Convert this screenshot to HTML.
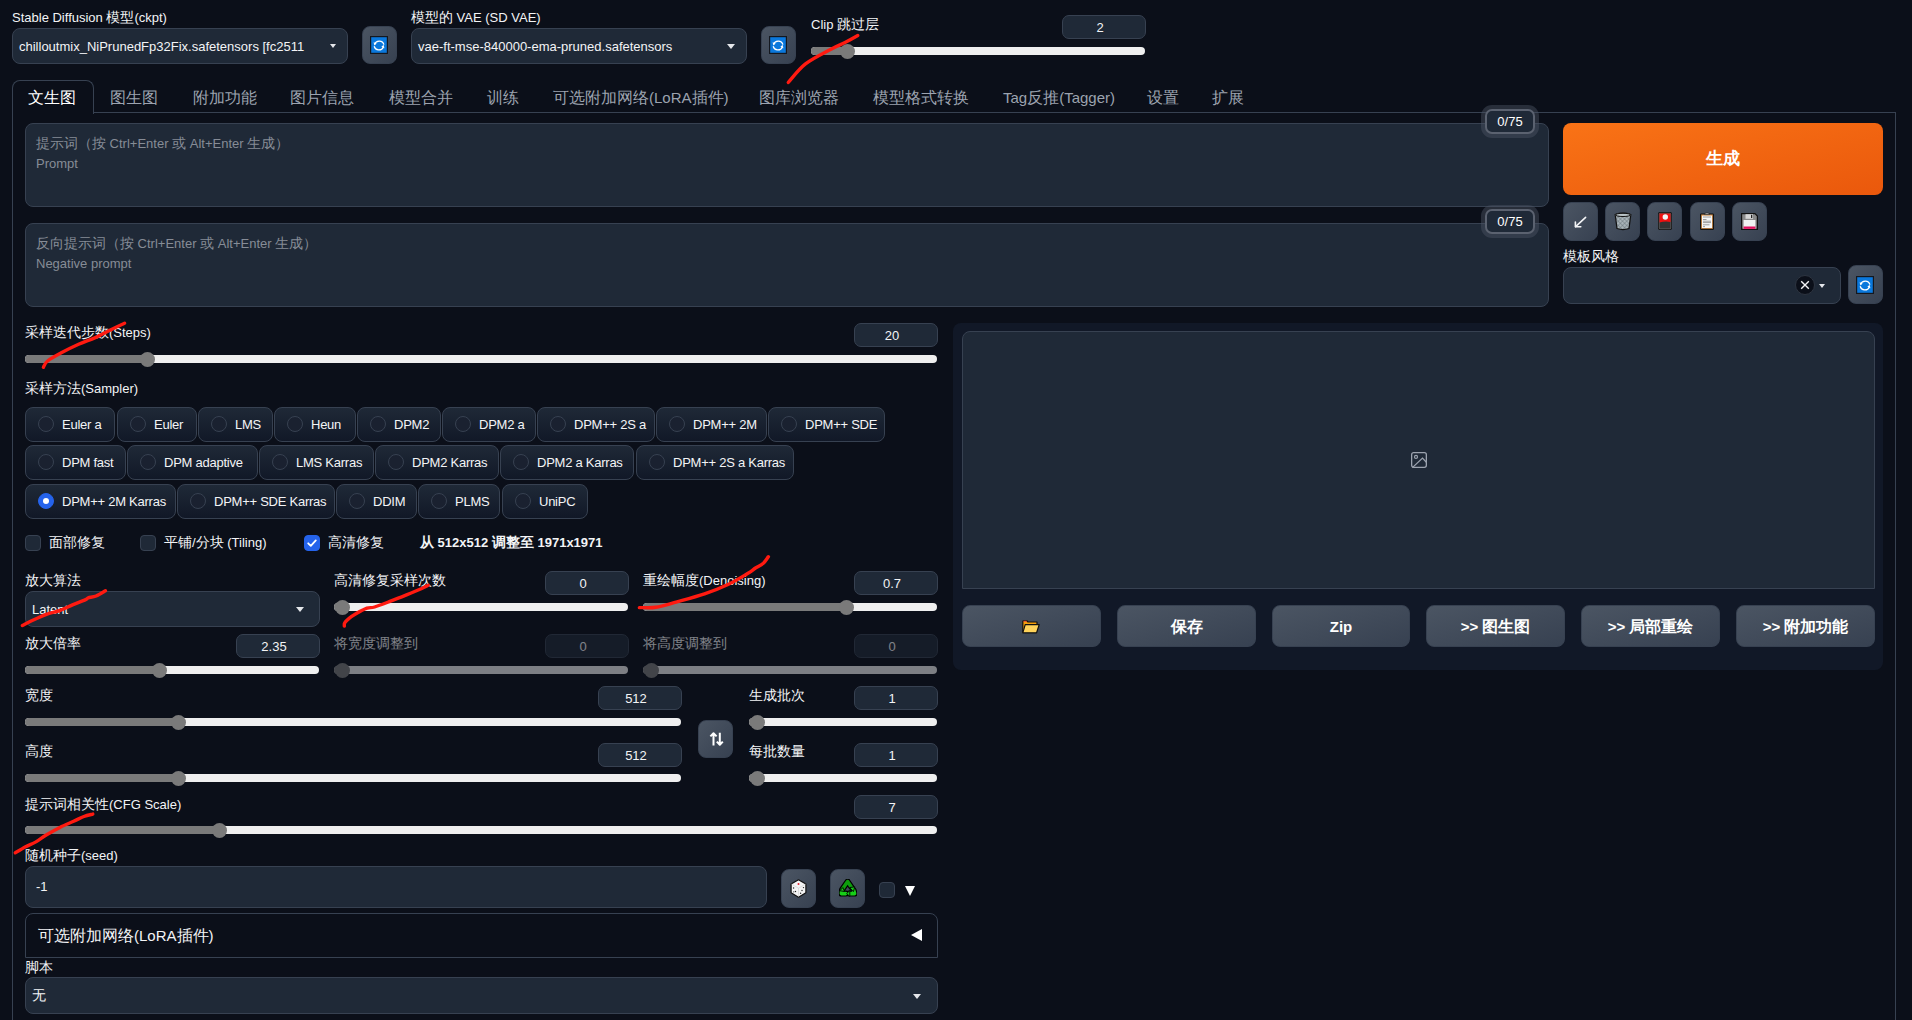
<!DOCTYPE html>
<html><head><meta charset="utf-8">
<style>
*{box-sizing:border-box;margin:0;padding:0}
html,body{width:1912px;height:1020px;overflow:hidden;background:#0b0f19}
body{position:relative;font-family:"Liberation Sans",sans-serif;color:#e5e7eb;font-size:13px}
.a{position:absolute}
.t{position:absolute;white-space:nowrap;line-height:16px;font-size:13px;color:#f3f4f6;padding-top:1px}
.inp{position:absolute;background:#1f2937;border:1px solid #374151;border-radius:8px}
.num{position:absolute;background:#1f2937;border:1px solid #374151;border-radius:7px;height:24px;width:84px;text-align:center;line-height:23px;padding-right:8px;font-size:13px;color:#f3f4f6}
.btn{position:absolute;background:linear-gradient(to bottom right,#4b5563,#374151);border-radius:8px;border:1px solid #374151}
.trk{position:absolute;height:8px;border-radius:4px;background:#efefef}
.fill{position:absolute;left:0;top:0;height:8px;border-radius:4px;background:#7a7a7a}
.thm{position:absolute;width:15px;height:15px;border-radius:50%;background:#7a7a7a;top:-3.5px}
.dis{opacity:.5}
.rad{position:absolute;height:35px;background:#111827;border:1px solid #374151;border-radius:8px;font-size:13px;line-height:33px;color:#f3f4f6;white-space:nowrap}
.rad i{position:absolute;left:12px;top:8px;width:16px;height:16px;border-radius:50%;border:1px solid #374151;background:#1a2130}
.rad span{position:absolute;left:36px;top:0;letter-spacing:-0.25px}
.tab{position:absolute;top:88px;font-size:15px;line-height:18px;padding-top:1px;color:#9ca3af;white-space:nowrap}
.arr{position:absolute;width:0;height:0;border-left:4px solid transparent;border-right:4px solid transparent;border-top:5px solid #e5e7eb}
.cb{position:absolute;width:16px;height:16px;border-radius:4px;background:#1f2937;border:1px solid #374151}
.cb.on{background:#2563eb;border-color:#2563eb}
.cb.on svg{position:absolute;left:-1px;top:-1px}
.rad{background:linear-gradient(to bottom,#1f2937,#111827)}
.rad i.on{background:#2563eb;border-color:#2563eb}
.rad i.on:after{content:"";position:absolute;left:4px;top:4px;width:6px;height:6px;border-radius:50%;background:#fff}
.ob{text-align:center;line-height:41px;font-weight:bold;font-size:15px;color:#fff}
.c{font-size:1.077em;line-height:0}
</style></head><body>
<!-- TOP ROW -->
<div class="t" style="left:12px;top:9px">Stable Diffusion <span class="c">模型</span>(ckpt)</div>
<div class="inp" style="left:12px;top:28px;width:336px;height:36px"><div class="t" style="left:6px;top:9px">chilloutmix_NiPrunedFp32Fix.safetensors [fc2511</div></div>
<div class="arr" style="left:330px;top:44px;border-left-width:3px;border-right-width:3px;border-top-width:4px"></div>
<div class="btn" style="left:362px;top:26px;width:35px;height:38px"></div>
<div class="t" style="left:411px;top:9px"><span class="c">模型的</span> VAE (SD VAE)</div>
<div class="inp" style="left:411px;top:28px;width:336px;height:36px"><div class="t" style="left:6px;top:9px">vae-ft-mse-840000-ema-pruned.safetensors</div></div>
<div class="arr" style="left:727px;top:44px"></div>
<div class="btn" style="left:761px;top:26px;width:35px;height:38px"></div>
<div class="t" style="left:811px;top:16px">Clip <span class="c">跳过层</span></div>
<div class="num" style="left:1062px;top:15px">2</div>
<div class="trk" style="left:811px;top:47px;width:334px"><div class="fill" style="width:40px"></div><div class="thm" style="left:29px"></div></div>

<!-- TABS -->
<div class="a" style="left:12px;top:80px;width:82px;height:34px;border:1px solid #374151;border-bottom:none;border-radius:8px 8px 0 0;background:#0b0f19;z-index:2"></div>
<div class="a" style="left:12px;top:112px;width:1884px;height:920px;border:1px solid #374151;border-bottom:none"></div>
<div class="tab" style="left:28px;color:#fff;z-index:3"><span class="c">文生图</span></div>
<div class="tab" style="left:110px"><span class="c">图生图</span></div>
<div class="tab" style="left:193px"><span class="c">附加功能</span></div>
<div class="tab" style="left:290px"><span class="c">图片信息</span></div>
<div class="tab" style="left:389px"><span class="c">模型合并</span></div>
<div class="tab" style="left:487px"><span class="c">训练</span></div>
<div class="tab" style="left:553px"><span class="c">可选附加网络</span>(LoRA<span class="c">插件</span>)</div>
<div class="tab" style="left:759px"><span class="c">图库浏览器</span></div>
<div class="tab" style="left:873px"><span class="c">模型格式转换</span></div>
<div class="tab" style="left:1003px">Tag<span class="c">反推</span>(Tagger)</div>
<div class="tab" style="left:1147px"><span class="c">设置</span></div>
<div class="tab" style="left:1212px"><span class="c">扩展</span></div>

<!--PROMPTS-->
<div class="inp" style="left:25px;top:123px;width:1524px;height:84px"></div>
<div class="t" style="left:36px;top:135px;color:#868c96"><span class="c">提示词（按</span> Ctrl+Enter <span class="c">或</span> Alt+Enter <span class="c">生成）</span></div>
<div class="t" style="left:36px;top:155px;color:#868c96">Prompt</div>
<div class="cnt a" style="left:1485px;top:109px;width:50px;height:25px;border:2px solid #5b6270;border-radius:7px;background:#1f2937;box-shadow:0 0 0 4px rgba(75,85,99,.45);text-align:center;line-height:21px;font-size:13px;color:#fff">0/75</div>
<div class="inp" style="left:25px;top:223px;width:1524px;height:84px"></div>
<div class="t" style="left:36px;top:235px;color:#868c96"><span class="c">反向提示词（按</span> Ctrl+Enter <span class="c">或</span> Alt+Enter <span class="c">生成）</span></div>
<div class="t" style="left:36px;top:255px;color:#868c96">Negative prompt</div>
<div class="cnt a" style="left:1485px;top:209px;width:50px;height:25px;border:2px solid #5b6270;border-radius:7px;background:#1f2937;box-shadow:0 0 0 4px rgba(75,85,99,.45);text-align:center;line-height:21px;font-size:13px;color:#fff">0/75</div>

<div class="a" style="left:1563px;top:123px;width:320px;height:72px;border-radius:8px;background:linear-gradient(to bottom right,#f97316,#ea580c);color:#fff;font-weight:bold;font-size:16px;text-align:center;line-height:72px"><span class="c">生成</span></div>
<div class="btn" style="left:1563px;top:202px;width:35px;height:39px"></div>
<div class="btn" style="left:1605px;top:202px;width:35px;height:39px"></div>
<div class="btn" style="left:1647px;top:202px;width:35px;height:39px"></div>
<div class="btn" style="left:1690px;top:202px;width:35px;height:39px"></div>
<div class="btn" style="left:1732px;top:202px;width:35px;height:39px"></div>
<div class="t" style="left:1563px;top:248px"><span class="c">模板风格</span></div>
<div class="inp" style="left:1563px;top:267px;width:278px;height:37px"></div>
<div class="btn" style="left:1848px;top:265px;width:35px;height:39px"></div>
<div class="a" style="left:1795px;top:275px;width:20px;height:20px;border-radius:50%;background:#0b0f19;border:1px solid #2d3440"></div>
<svg class="a" style="left:1800px;top:280px" width="10" height="10" viewBox="0 0 10 10"><path d="M1.2 1.2 L8.8 8.8 M8.8 1.2 L1.2 8.8" stroke="#f3f4f6" stroke-width="1.4"/></svg>
<div class="arr" style="left:1819px;top:284px;border-left-width:3.5px;border-right-width:3.5px;border-top-width:4px"></div>

<!--LEFT-->
<div class="t" style="left:25px;top:324px;"><span class="c">采样迭代步数</span>(Steps)</div>
<div class="num" style="left:854px;top:323px">20</div>
<div class="trk" style="left:25px;top:355px;width:912px"><div class="fill" style="width:122px"></div><div class="thm" style="left:114.5px"></div></div>
<div class="t" style="left:25px;top:380px;"><span class="c">采样方法</span>(Sampler)</div>
<div class="rad" style="left:25px;top:407px;width:90px"><i></i><span>Euler a</span></div>
<div class="rad" style="left:117px;top:407px;width:80px"><i></i><span>Euler</span></div>
<div class="rad" style="left:198px;top:407px;width:74.5px"><i></i><span>LMS</span></div>
<div class="rad" style="left:274px;top:407px;width:81.5px"><i></i><span>Heun</span></div>
<div class="rad" style="left:357px;top:407px;width:83.5px"><i></i><span>DPM2</span></div>
<div class="rad" style="left:442px;top:407px;width:93.5px"><i></i><span>DPM2 a</span></div>
<div class="rad" style="left:537px;top:407px;width:117.5px"><i></i><span>DPM++ 2S a</span></div>
<div class="rad" style="left:656px;top:407px;width:110.5px"><i></i><span>DPM++ 2M</span></div>
<div class="rad" style="left:768px;top:407px;width:116.5px"><i></i><span>DPM++ SDE</span></div>
<div class="rad" style="left:25px;top:445px;width:100.5px"><i></i><span>DPM fast</span></div>
<div class="rad" style="left:127px;top:445px;width:130.5px"><i></i><span>DPM adaptive</span></div>
<div class="rad" style="left:259px;top:445px;width:114.5px"><i></i><span>LMS Karras</span></div>
<div class="rad" style="left:375px;top:445px;width:123.5px"><i></i><span>DPM2 Karras</span></div>
<div class="rad" style="left:500px;top:445px;width:134px"><i></i><span>DPM2 a Karras</span></div>
<div class="rad" style="left:636px;top:445px;width:157.5px"><i></i><span>DPM++ 2S a Karras</span></div>
<div class="rad" style="left:25px;top:484px;width:150.5px"><i class="on"></i><span>DPM++ 2M Karras</span></div>
<div class="rad" style="left:177px;top:484px;width:157.5px"><i></i><span>DPM++ SDE Karras</span></div>
<div class="rad" style="left:336px;top:484px;width:80.5px"><i></i><span>DDIM</span></div>
<div class="rad" style="left:418px;top:484px;width:82px"><i></i><span>PLMS</span></div>
<div class="rad" style="left:502px;top:484px;width:86px"><i></i><span>UniPC</span></div>
<div class="cb" style="left:25px;top:535px"></div>
<div class="t" style="left:49px;top:534px;"><span class="c">面部修复</span></div>
<div class="cb" style="left:140px;top:535px"></div>
<div class="t" style="left:164px;top:534px;"><span class="c">平铺</span>/<span class="c">分块</span> (Tiling)</div>
<div class="cb on" style="left:304px;top:535px"><svg width="16" height="16" viewBox="0 0 16 16"><path d="M4.2 8.3 L6.8 10.8 L11.8 5.4" stroke="#fff" stroke-width="1.8" fill="none" stroke-linecap="round" stroke-linejoin="round"/></svg></div>
<div class="t" style="left:328px;top:534px;"><span class="c">高清修复</span></div>
<div class="t" style="left:420px;top:534px;font-weight:bold"><span class="c">从</span> 512x512 <span class="c">调整至</span> 1971x1971</div>
<div class="t" style="left:25px;top:572px;"><span class="c">放大算法</span></div>
<div class="inp" style="left:25px;top:591px;width:295px;height:36px"><div class="t" style="left:6px;top:9px">Latent</div></div>
<div class="arr" style="left:296px;top:607px"></div>
<div class="t" style="left:334px;top:572px;"><span class="c">高清修复采样次数</span></div>
<div class="num" style="left:545px;top:571px">0</div>
<div class="trk" style="left:334px;top:603px;width:294px"><div class="fill" style="width:8px"></div><div class="thm" style="left:0.5px"></div></div>
<div class="t" style="left:643px;top:572px;"><span class="c">重绘幅度</span>(Denoising)</div>
<div class="num" style="left:854px;top:571px">0.7</div>
<div class="trk" style="left:643px;top:603px;width:294px"><div class="fill" style="width:203px"></div><div class="thm" style="left:195.5px"></div></div>
<div class="t" style="left:25px;top:635px;"><span class="c">放大倍率</span></div>
<div class="num" style="left:236px;top:634px">2.35</div>
<div class="trk" style="left:25px;top:666px;width:294px"><div class="fill" style="width:134px"></div><div class="thm" style="left:126.5px"></div></div>
<div class="t" style="left:334px;top:635px;opacity:.5"><span class="c">将宽度调整到</span></div>
<div class="num dis" style="left:545px;top:634px">0</div>
<div class="trk dis" style="left:334px;top:666px;width:294px"><div class="fill" style="width:8px"></div><div class="thm" style="left:0.5px"></div></div>
<div class="t" style="left:643px;top:635px;opacity:.5"><span class="c">将高度调整到</span></div>
<div class="num dis" style="left:854px;top:634px">0</div>
<div class="trk dis" style="left:643px;top:666px;width:294px"><div class="fill" style="width:8px"></div><div class="thm" style="left:0.5px"></div></div>
<div class="t" style="left:25px;top:687px;"><span class="c">宽度</span></div>
<div class="num" style="left:598px;top:686px">512</div>
<div class="trk" style="left:25px;top:718px;width:656px"><div class="fill" style="width:153px"></div><div class="thm" style="left:145.5px"></div></div>
<div class="t" style="left:25px;top:743px;"><span class="c">高度</span></div>
<div class="num" style="left:598px;top:743px">512</div>
<div class="trk" style="left:25px;top:774px;width:656px"><div class="fill" style="width:153px"></div><div class="thm" style="left:145.5px"></div></div>
<div class="btn" style="left:698px;top:720px;width:35px;height:38px"></div>
<div class="t" style="left:749px;top:687px;"><span class="c">生成批次</span></div>
<div class="num" style="left:854px;top:686px">1</div>
<div class="trk" style="left:749px;top:718px;width:188px"><div class="fill" style="width:8px"></div><div class="thm" style="left:0.5px"></div></div>
<div class="t" style="left:749px;top:743px;"><span class="c">每批数量</span></div>
<div class="num" style="left:854px;top:743px">1</div>
<div class="trk" style="left:749px;top:774px;width:188px"><div class="fill" style="width:8px"></div><div class="thm" style="left:0.5px"></div></div>
<div class="t" style="left:25px;top:796px;"><span class="c">提示词相关性</span>(CFG Scale)</div>
<div class="num" style="left:854px;top:795px">7</div>
<div class="trk" style="left:25px;top:826px;width:912px"><div class="fill" style="width:194px"></div><div class="thm" style="left:186.5px"></div></div>
<div class="t" style="left:25px;top:847px;"><span class="c">随机种子</span>(seed)</div>
<div class="inp" style="left:25px;top:866px;width:742px;height:42px"><div class="t" style="left:10px;top:11px">-1</div></div>
<div class="btn" style="left:781px;top:869px;width:35px;height:39px"></div>
<div class="btn" style="left:830px;top:869px;width:35px;height:39px"></div>
<div class="cb" style="left:879px;top:882px"></div>
<div class="a" style="left:905px;top:886px;width:0;height:0;border-left:5px solid transparent;border-right:5px solid transparent;border-top:10px solid #fff"></div>
<div class="a" style="left:25px;top:913px;width:913px;height:45px;border:1px solid #374151;border-radius:8px 8px 0 0;background:#0b0f19"></div>
<div class="t" style="left:38px;top:926px;font-size:15px;line-height:18px"><span class="c">可选附加网络</span>(LoRA<span class="c">插件</span>)</div>
<div class="a" style="left:911px;top:929px;width:0;height:0;border-top:6px solid transparent;border-bottom:6px solid transparent;border-right:11px solid #fff"></div>
<div class="t" style="left:25px;top:959px;"><span class="c">脚本</span></div>
<div class="inp" style="left:25px;top:977px;width:913px;height:37px"><div class="t" style="left:6px;top:9px"><span class="c">无</span></div></div>
<div class="arr" style="left:913px;top:994px"></div>
<!--ENDLEFT-->
<!--RIGHT-->
<div class="a" style="left:953px;top:323px;width:930px;height:347px;background:#111827;border-radius:8px"></div>
<div class="a" style="left:962px;top:331px;width:913px;height:258px;background:#1f2937;border:1px solid #374151;border-radius:8px 8px 0 0"></div>
<svg class="a" style="left:1410px;top:451px" width="18" height="18" viewBox="0 0 18 18"><rect x="1.65" y="1.65" width="14.7" height="14.7" rx="2" fill="none" stroke="#9ca3af" stroke-width="1.3"/><circle cx="6" cy="5.9" r="1.5" fill="none" stroke="#9ca3af" stroke-width="1.2"/><path d="M16.4 11.2 L12.5 7.1 L2.4 16.6" fill="none" stroke="#9ca3af" stroke-width="1.3"/></svg>
<div class="btn ob" style="left:962px;top:605px;width:139px;height:42px"></div>
<div class="btn ob" style="left:1117px;top:605px;width:139px;height:42px"><span class="c">保存</span></div>
<div class="btn ob" style="left:1272px;top:605px;width:138px;height:42px">Zip</div>
<div class="btn ob" style="left:1426px;top:605px;width:139px;height:42px">&gt;&gt; <span class="c">图生图</span></div>
<div class="btn ob" style="left:1581px;top:605px;width:139px;height:42px">&gt;&gt; <span class="c">局部重绘</span></div>
<div class="btn ob" style="left:1736px;top:605px;width:139px;height:42px">&gt;&gt; <span class="c">附加功能</span></div>

<!--ENDRIGHT-->
<!--ICONS-->
<svg class="a" style="left:370px;top:36px" width="18" height="18" viewBox="0 0 18 18"><rect x="0.6" y="0.6" width="16.8" height="16.8" fill="#0a78dc" stroke="#14181f" stroke-width="1.2"/><path d="M4.6 8.2 A4.9 4.9 0 0 1 13.9 8.6" fill="none" stroke="#fff" stroke-width="1.3"/><path d="M13.4 10.9 A4.9 4.9 0 0 1 4.2 10.3" fill="none" stroke="#fff" stroke-width="1.3"/><path d="M3.6 6.2 L6.6 7.6 L4.4 9.6Z" fill="#fff"/><path d="M14.4 12.2 L11.4 10.8 L13.6 8.8Z" fill="#fff"/></svg>
<svg class="a" style="left:769px;top:36px" width="18" height="18" viewBox="0 0 18 18"><rect x="0.6" y="0.6" width="16.8" height="16.8" fill="#0a78dc" stroke="#14181f" stroke-width="1.2"/><path d="M4.6 8.2 A4.9 4.9 0 0 1 13.9 8.6" fill="none" stroke="#fff" stroke-width="1.3"/><path d="M13.4 10.9 A4.9 4.9 0 0 1 4.2 10.3" fill="none" stroke="#fff" stroke-width="1.3"/><path d="M3.6 6.2 L6.6 7.6 L4.4 9.6Z" fill="#fff"/><path d="M14.4 12.2 L11.4 10.8 L13.6 8.8Z" fill="#fff"/></svg>
<svg class="a" style="left:1856px;top:276px" width="18" height="18" viewBox="0 0 18 18"><rect x="0.6" y="0.6" width="16.8" height="16.8" fill="#0a78dc" stroke="#14181f" stroke-width="1.2"/><path d="M4.6 8.2 A4.9 4.9 0 0 1 13.9 8.6" fill="none" stroke="#fff" stroke-width="1.3"/><path d="M13.4 10.9 A4.9 4.9 0 0 1 4.2 10.3" fill="none" stroke="#fff" stroke-width="1.3"/><path d="M3.6 6.2 L6.6 7.6 L4.4 9.6Z" fill="#fff"/><path d="M14.4 12.2 L11.4 10.8 L13.6 8.8Z" fill="#fff"/></svg>
<svg class="a" style="left:1573px;top:215px" width="15" height="14" viewBox="0 0 15 14"><path d="M12.6 2.4 L2.6 11.6" stroke="#f3f4f6" stroke-width="1.6" stroke-linecap="round"/><path d="M2.4 7 L2.4 11.8 L7.8 11.8" fill="none" stroke="#f3f4f6" stroke-width="1.6" stroke-linecap="round" stroke-linejoin="round"/></svg>
<svg class="a" style="left:1614px;top:212px" width="18" height="19" viewBox="0 0 18 19"><defs><pattern id="mesh" width="3" height="3" patternUnits="userSpaceOnUse" patternTransform="rotate(45)"><rect width="3" height="3" fill="#a9b4b8"/><path d="M0 0 L3 0 M0 0 L0 3" stroke="#5f6a70" stroke-width="0.8"/></pattern></defs><path d="M1.2 2.6 Q9 -0.2 16.8 2.6 L15 16.5 Q9 18.6 3 16.5 Z" fill="url(#mesh)" stroke="#111" stroke-width="1.2"/><ellipse cx="9" cy="2.9" rx="7.6" ry="1.6" fill="#b9c3c6" stroke="#111" stroke-width="1"/></svg>
<svg class="a" style="left:1658px;top:212px" width="14" height="18" viewBox="0 0 14 18"><rect x="0.6" y="0.6" width="12.8" height="16.8" rx="1.2" fill="#333" stroke="#111" stroke-width="1.2"/><rect x="1.2" y="1.2" width="11.6" height="15.6" rx="0.8" fill="none" stroke="#777" stroke-width="0.6"/><path d="M1.5 1.5 H12.5 V10 Q7 8.8 1.5 10.6 Z" fill="#f01010"/><circle cx="7.3" cy="5" r="2.7" fill="#f2f4f5"/></svg>
<svg class="a" style="left:1700px;top:212px" width="14" height="18" viewBox="0 0 14 18"><rect x="0.6" y="2" width="12.8" height="15.4" rx="0.6" fill="#d9914a" stroke="#111" stroke-width="1.2"/><rect x="2" y="3.6" width="10" height="12.4" fill="#f6f7f8"/><path d="M4.5 2.6 L5.5 1 L8.5 1 L9.5 2.6 Z" fill="#bbb" stroke="#222" stroke-width="0.6"/><path d="M3 5 H11 M3 7.5 H6.5 M3 9.2 H11 M3 10.6 H11 M3 12.8 H9.5 M3 14.6 H5" stroke="#888" stroke-width="0.8"/></svg>
<svg class="a" style="left:1741px;top:213px" width="17" height="17" viewBox="0 0 17 17"><path d="M0.6 0.6 H14 L16.4 3 V16.4 H0.6 Z" fill="#8a8a8a" stroke="#111" stroke-width="1.2"/><rect x="4.5" y="1.2" width="7.5" height="4.6" fill="#d6d6d6"/><rect x="10" y="1.8" width="1.3" height="3.2" fill="#222"/><rect x="2.6" y="7" width="11.8" height="9" fill="#f0f2f2"/><rect x="2.6" y="13.5" width="11.8" height="2.4" fill="#e0115f"/></svg>
<svg class="a" style="left:707px;top:731px" width="18" height="16" viewBox="0 0 18 16"><path d="M6.5 14.5 V2.6 M3.4 5.4 L6.5 2.2 L9.6 5.4" fill="none" stroke="#fff" stroke-width="2" stroke-linejoin="round"/><path d="M12.8 1.8 V13.4 M9.8 10.6 L12.8 13.8 L15.8 10.6" fill="none" stroke="#fff" stroke-width="2" stroke-linejoin="round"/></svg>
<svg class="a" style="left:790px;top:879px" width="17" height="19" viewBox="0 0 17 19"><path d="M8.5 0.8 L15.9 5 L15.9 13.8 L8.5 18.2 L1.1 13.8 L1.1 5 Z" fill="#f4f4f4" stroke="#111" stroke-width="1.2" stroke-linejoin="round"/><path d="M1.6 5.2 L8.5 9.2 L15.4 5.2 M8.5 9.2 V17.6" fill="none" stroke="#cfcfcf" stroke-width="0.6"/><circle cx="8.5" cy="5" r="1" fill="#e02030"/><circle cx="3.6" cy="9" r="0.7" fill="#222"/><circle cx="5.5" cy="12.5" r="0.7" fill="#222"/><circle cx="3.8" cy="12.8" r="0.6" fill="#222"/><circle cx="13.5" cy="8.6" r="0.7" fill="#222"/><circle cx="12" cy="11.5" r="0.7" fill="#222"/><circle cx="10.6" cy="14.2" r="0.7" fill="#222"/></svg>
<svg class="a" style="left:839px;top:879px" width="18" height="18" viewBox="0 0 18 18"><g fill="none" stroke-linecap="round" stroke-linejoin="round"><path d="M3.2 10.5 L8.6 2.6 L12.6 8.4" stroke="#000" stroke-width="6"/><path d="M14.6 11.2 L15.6 14.6 L10 14.6" stroke="#000" stroke-width="6"/><path d="M6.8 14.6 L2.4 14.6 L2.6 12.4" stroke="#000" stroke-width="6"/><path d="M3.2 10.5 L8.6 2.6 L12.6 8.4" stroke="#0d9e0d" stroke-width="3.6"/><path d="M14.6 11.2 L15.6 14.6 L10 14.6" stroke="#17cf17" stroke-width="3.6"/><path d="M6.8 14.6 L2.4 14.6 L2.6 12.4" stroke="#17cf17" stroke-width="3.6"/></g><path d="M10.6 8.6 L15.8 7.8 L14.4 12.6 Z" fill="#14c814" stroke="#000" stroke-width="0.9" stroke-linejoin="round"/><path d="M10.8 11.6 L7.6 14.6 L10.8 17.4 Z" fill="#17cf17" stroke="#000" stroke-width="0.9" stroke-linejoin="round"/><path d="M0.8 11.8 L3.8 8.6 L5.6 12.4 Z" fill="#17cf17" stroke="#000" stroke-width="0.9" stroke-linejoin="round"/></svg>
<svg class="a" style="left:1022px;top:620px" width="18" height="14" viewBox="0 0 18 14"><path d="M0.8 12.8 L0.8 1.6 Q0.8 0.8 1.6 0.8 L5 0.8 L6 2 L15 2 L15 4.6" fill="#f59e0b" stroke="#111" stroke-width="1.2" stroke-linejoin="round"/><path d="M0.8 12.8 L3.2 4.6 L17.2 4.6 L14.6 12.8 Z" fill="#ffd35a" stroke="#111" stroke-width="1.2" stroke-linejoin="round"/><path d="M1.6 1.4 L4.6 1.4" stroke="#e53" stroke-width="1.2"/></svg>
<!--ENDICONS-->
<!--RED-->
<svg class="a" style="left:0;top:0;z-index:50" width="1912" height="1020"><g fill="none" stroke="#ff1a10" stroke-width="3.4" stroke-linecap="round" stroke-linejoin="round"><path d="M788.3 82.4 C791.2 79.3 798.4 69.4 805.5 63.9 C812.6 58.4 824.4 52.8 831.0 49.2 C837.6 45.6 840.5 44.8 845.0 42.5 C849.5 40.2 855.7 36.7 857.8 35.5"/><path d="M43.4 367.3 C44.1 366.2 44.5 363.4 47.6 361.0 C50.7 358.6 56.6 355.4 61.8 352.6 C67.0 349.8 73.0 346.8 78.6 344.3 C84.2 341.8 90.0 340.0 95.3 337.6 C100.6 335.2 105.5 332.4 110.4 330.0 C115.3 327.6 122.2 324.4 124.6 323.3"/><path d="M22.3 625.5 C24.1 624.6 29.3 621.9 33.3 620.0 C37.3 618.1 42.0 615.9 46.4 614.3 C50.8 612.7 55.1 612.2 59.5 610.6 C63.9 609.0 68.2 606.7 72.5 604.9 C76.8 603.1 83.0 600.8 85.6 599.6 C88.2 598.4 86.5 598.4 88.2 597.8 C90.0 597.2 93.2 597.2 96.1 596.0 C99.0 594.8 103.9 591.7 105.5 590.8"/><path d="M344.3 626.1 C344.4 625.6 343.9 624.2 344.7 622.9 C345.5 621.6 347.3 619.9 349.1 618.4 C350.9 616.9 352.5 615.7 355.5 614.0 C358.5 612.3 363.8 609.4 367.0 608.2 C370.2 607.0 370.7 608.2 374.6 607.0 C378.5 605.8 385.2 603.2 390.5 601.2 C395.8 599.2 401.3 597.0 406.5 594.9 C411.7 592.8 418.2 590.1 421.8 588.5 C425.4 586.9 427.1 585.8 428.2 585.3"/><path d="M639.4 607.6 C642.1 607.5 649.6 608.3 655.9 607.3 C662.2 606.3 668.9 604.0 677.0 601.8 C685.1 599.6 696.0 596.8 704.5 593.9 C713.0 591.0 720.8 587.9 728.0 584.5 C735.2 581.1 743.0 576.2 747.6 573.5 C752.2 570.8 752.9 569.7 755.5 568.0 C758.1 566.3 761.1 565.2 763.3 563.3 C765.4 561.4 767.5 557.8 768.4 556.7"/><path d="M15.3 852.8 C17.0 851.8 22.2 848.5 25.6 846.7 C29.0 844.9 32.5 843.9 35.9 841.9 C39.3 839.9 42.2 837.4 46.2 835.0 C50.2 832.6 55.3 829.7 59.9 827.4 C64.5 825.1 69.6 823.1 73.6 821.3 C77.6 819.5 80.7 817.7 83.9 816.5 C87.1 815.3 91.3 814.5 92.8 814.1"/></g></svg>
<!--ENDRED-->
</body></html>
